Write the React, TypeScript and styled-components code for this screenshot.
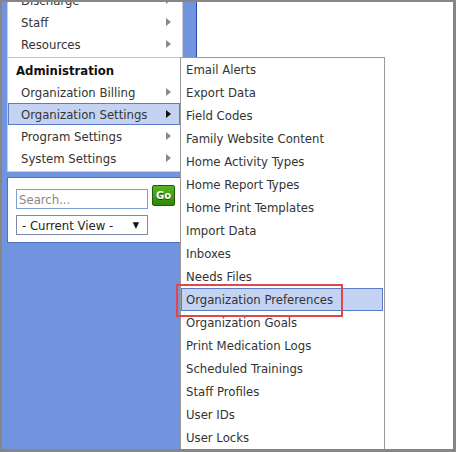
import React from "react";
import styled, { createGlobalStyle } from "styled-components";

const Global = createGlobalStyle`
  html, body { margin: 0; padding: 0; background: #fff; }
  body { font-family: "DejaVu Sans Condensed", "Liberation Sans", sans-serif; }
  * { box-sizing: border-box; }
`;

const Frame = styled.div`
  position: relative;
  width: 456px;
  height: 452px;
  border-style: solid;
  border-color: #868686;
  border-width: 2px 3px 3px 2px;
  display: flex;
  overflow: hidden;
  background: #fff;
  font-size: 13px;
  color: #333;
`;

const Sidebar = styled.div`
  width: 195px;
  flex: none;
  background: #7293dd;
  border-right: 1px solid #2848a8;
  display: flex;
  flex-direction: column;
  padding-left: 5px;
`;

const MenuPanel = styled.div`
  width: 176px;
  margin-top: -13px;
  background: #fff;
  border: 1px solid #c8ccd6;
  border-top: none;
  padding-bottom: 2px;
`;

const MenuRow = styled.div<{ $active?: boolean }>`
  height: 22px;
  display: flex;
  align-items: center;
  justify-content: space-between;
  padding: 0 8px 0 12px;
  margin: 0 2px 0 0;
  background: ${(p) => (p.$active ? "#c3d3f1" : "transparent")};
  border: 1px solid ${(p) => (p.$active ? "#5b7cc6" : "transparent")};
  white-space: nowrap;
`;

const Arrow = styled.span<{ $active?: boolean }>`
  width: 0;
  height: 0;
  border-top: 4px solid transparent;
  border-bottom: 4px solid transparent;
  border-left: 5px solid ${(p) => (p.$active ? "#111" : "#8a8a8a")};
`;

const Separator = styled.div`
  height: 1px;
  background: #c4c4c4;
  margin: 2px 0 1px -1px;
`;

const Heading = styled.div`
  height: 22px;
  display: flex;
  align-items: center;
  padding-left: 8px;
  font-weight: bold;
  color: #111;
`;

const SearchPanel = styled.div`
  width: 176px;
  margin-top: 5px;
  height: 66px;
  background: #fff;
  border: 1px solid #5070c0;
  padding: 7px 0 0 8px;
  display: flex;
  flex-direction: column;
  gap: 6px;
`;

const SearchRow = styled.div`
  display: flex;
  align-items: flex-start;
  gap: 4px;
`;

const SearchInput = styled.input`
  margin-top: 4px;
  width: 132px;
  height: 20px;
  border: 1px solid #7c9fd6;
  padding: 0 2px;
  font: inherit;
  font-size: 13px;
  color: #333;
  outline: none;
  &::placeholder { color: #888; }
`;

const GoButton = styled.button`
  width: 23px;
  height: 21px;
  padding: 0;
  border: 1px solid #1f5c02;
  border-radius: 2px;
  background: linear-gradient(#58b424, #2f8806);
  color: #fff;
  font-family: "DejaVu Sans", sans-serif;
  font-weight: bold;
  font-size: 10px;
  text-shadow: 0 1px 0 #1a4a00;
`;

const SelectBox = styled.div`
  width: 132px;
  height: 20px;
  border: 1px solid #7e8aa8;
  display: flex;
  align-items: center;
  justify-content: space-between;
  padding: 0 8px 0 5px;
  color: #222;
`;

const Caret = styled.span`
  font-size: 9px;
  color: #111;
`;

const Content = styled.div`
  flex: 1;
  background: #fff;
`;

const SubMenu = styled.div`
  position: absolute;
  left: 178px;
  top: 55px;
  width: 205px;
  height: 400px;
  background: #fff;
  border: 1px solid #9a9a9a;
`;

const SubItem = styled.div<{ $active?: boolean }>`
  height: 23px;
  display: flex;
  align-items: center;
  padding-left: 4px;
  margin-right: 1px;
  white-space: nowrap;
  background: ${(p) => (p.$active ? "#c3d3f1" : "transparent")};
  border: 1px solid ${(p) => (p.$active ? "#5b7cc6" : "transparent")};
`;

const Highlight = styled.div`
  position: absolute;
  left: 174px;
  top: 282px;
  width: 167px;
  height: 33px;
  border: 2px solid #e0474a;
  pointer-events: none;
`;

const topItems = [
  { label: "Discharge", arrow: true },
  { label: "Staff", arrow: true },
  { label: "Resources", arrow: true },
];

const adminItems = [
  { label: "Organization Billing" },
  { label: "Organization Settings", active: true },
  { label: "Program Settings" },
  { label: "System Settings" },
];

const subItems = [
  "Email Alerts",
  "Export Data",
  "Field Codes",
  "Family Website Content",
  "Home Activity Types",
  "Home Report Types",
  "Home Print Templates",
  "Import Data",
  "Inboxes",
  "Needs Files",
  "Organization Preferences",
  "Organization Goals",
  "Print Medication Logs",
  "Scheduled Trainings",
  "Staff Profiles",
  "User IDs",
  "User Locks",
];

export default function App() {
  return (
    <>
      <Global />
      <Frame>
        <Sidebar>
          <MenuPanel>
            {topItems.map((it) => (
              <MenuRow key={it.label}>
                <span>{it.label}</span>
                <Arrow />
              </MenuRow>
            ))}
            <Separator />
            <Heading>Administration</Heading>
            {adminItems.map((it) => (
              <MenuRow key={it.label} $active={it.active}>
                <span>{it.label}</span>
                <Arrow $active={it.active} />
              </MenuRow>
            ))}
          </MenuPanel>
          <SearchPanel>
            <SearchRow>
              <SearchInput placeholder="Search..." />
              <GoButton>Go</GoButton>
            </SearchRow>
            <SelectBox>
              <span>- Current View -</span>
              <Caret>▼</Caret>
            </SelectBox>
          </SearchPanel>
        </Sidebar>
        <Content />
        <SubMenu>
          {subItems.map((s) => (
            <SubItem key={s} $active={s === "Organization Preferences"}>
              {s}
            </SubItem>
          ))}
        </SubMenu>
        <Highlight />
      </Frame>
    </>
  );
}
